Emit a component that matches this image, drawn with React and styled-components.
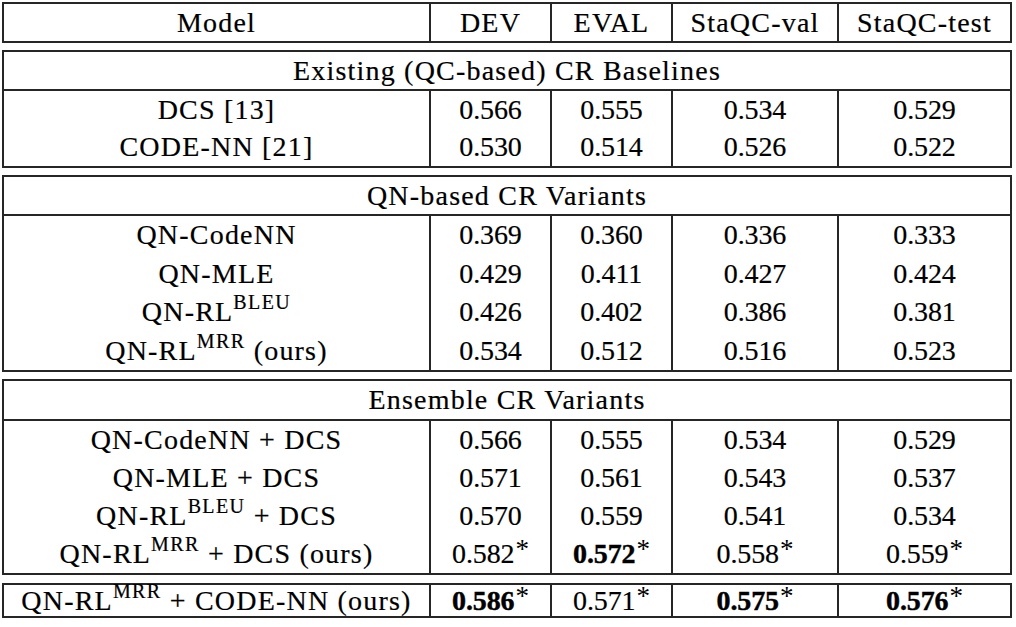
import styled, { createGlobalStyle } from "styled-components";

const GlobalStyle = createGlobalStyle`
  body {
    margin: 0;
    background: #fff;
  }
`;

const line = "2px solid #262626";

const Page = styled.div`
  padding: 2px 0 0 2px;
  width: 1010px;
  display: flex;
  flex-direction: column;
  gap: 7px;
  font-family: "Liberation Serif", "Times New Roman", serif;
  color: #000;
  -webkit-text-stroke: 0.2px #000;
`;

const Box = styled.div`
  border: ${line};
  margin-top: ${(p) => (p.$extra ? `${p.$extra}px` : "0")};
`;

const Title = styled.div`
  height: ${(p) => p.$h}px;
  display: flex;
  align-items: center;
  justify-content: center;
  border-bottom: ${line};
  font-size: 28px;
  letter-spacing: 1.2px;
`;

const Row = styled.div`
  display: grid;
  grid-template-columns: 425px 121px 121px 166px 173px;
  height: ${(p) => p.$h}px;
`;

const Cell = styled.div`
  display: flex;
  align-items: center;
  justify-content: center;
  font-size: 28px;
  white-space: pre;
  letter-spacing: ${(p) => (p.$text ? "1.2px" : "-0.1px")};
  & + & {
    border-left: ${line};
  }
`;

const Text = styled.span`
  line-height: 1;
`;

const Sup = styled.span`
  font-size: 20px;
  vertical-align: 12px;
  line-height: 0;
  letter-spacing: 1.4px;
`;

const Star = styled.span`
  font-size: 27px;
  vertical-align: 5px;
  line-height: 0;
  letter-spacing: 0;
  margin-left: 1px;
  -webkit-text-stroke: 0;
`;

const Bold = styled.b`
  font-weight: 700;
  -webkit-text-stroke: 0.4px #000;
`;

const v = (text, bold, star) => ({ text, bold, star });

const groups = [
  {
    title: "Existing (QC-based) CR Baselines",
    titleH: 37,
    rowH: 37.5,
    rows: [
      { model: "DCS [13]", vals: [v("0.566"), v("0.555"), v("0.534"), v("0.529")] },
      { model: "CODE-NN [21]", vals: [v("0.530"), v("0.514"), v("0.526"), v("0.522")] },
    ],
  },
  {
    title: "QN-based CR Variants",
    titleH: 37,
    rowH: 38.5,
    rows: [
      { model: "QN-CodeNN", vals: [v("0.369"), v("0.360"), v("0.336"), v("0.333")] },
      { model: "QN-MLE", vals: [v("0.429"), v("0.411"), v("0.427"), v("0.424")] },
      { model: "QN-RL", sup: "BLEU", vals: [v("0.426"), v("0.402"), v("0.386"), v("0.381")] },
      { model: "QN-RL", sup: "MRR", rest: " (ours)", vals: [v("0.534"), v("0.512"), v("0.516"), v("0.523")] },
    ],
  },
  {
    title: "Ensemble CR Variants",
    titleH: 38,
    rowH: 38,
    rows: [
      { model: "QN-CodeNN + DCS", vals: [v("0.566"), v("0.555"), v("0.534"), v("0.529")] },
      { model: "QN-MLE + DCS", vals: [v("0.571"), v("0.561"), v("0.543"), v("0.537")] },
      { model: "QN-RL", sup: "BLEU", rest: " + DCS", vals: [v("0.570"), v("0.559"), v("0.541"), v("0.534")] },
      {
        model: "QN-RL",
        sup: "MRR",
        rest: " + DCS (ours)",
        vals: [v("0.582", false, true), v("0.572", true, true), v("0.558", false, true), v("0.559", false, true)],
      },
    ],
  },
];

const best = {
  model: "QN-RL",
  sup: "MRR",
  rest: " + CODE-NN (ours)",
  vals: [v("0.586", true, true), v("0.571", false, true), v("0.575", true, true), v("0.576", true, true)],
};

const ModelName = ({ row }) => (
  <Cell $text>
    <Text>
      {row.model}
      {row.sup && <Sup>{row.sup}</Sup>}
      {row.rest}
    </Text>
  </Cell>
);

const Value = ({ val }) => (
  <Cell>
    <Text>
      {val.bold ? <Bold>{val.text}</Bold> : val.text}
      {val.star && <Star>*</Star>}
    </Text>
  </Cell>
);

const DataRow = ({ row, h }) => (
  <Row $h={h}>
    <ModelName row={row} />
    {row.vals.map((val, i) => (
      <Value key={i} val={val} />
    ))}
  </Row>
);

const App = () => {
  return (
    <>
      <GlobalStyle />
      <Page>
        <Box>
          <Row $h={37}>
            {["Model", "DEV", "EVAL", "StaQC-val", "StaQC-test"].map((h) => (
              <Cell key={h} $text>
                <Text>{h}</Text>
              </Cell>
            ))}
          </Row>
        </Box>
        {groups.map((g) => (
          <Box key={g.title}>
            <Title $h={g.titleH}>{g.title}</Title>
            {g.rows.map((r, i) => (
              <DataRow key={i} row={r} h={g.rowH} />
            ))}
          </Box>
        ))}
        <Box $extra={1}>
          <DataRow row={best} h={31} />
        </Box>
      </Page>
    </>
  );
};

export default App;
